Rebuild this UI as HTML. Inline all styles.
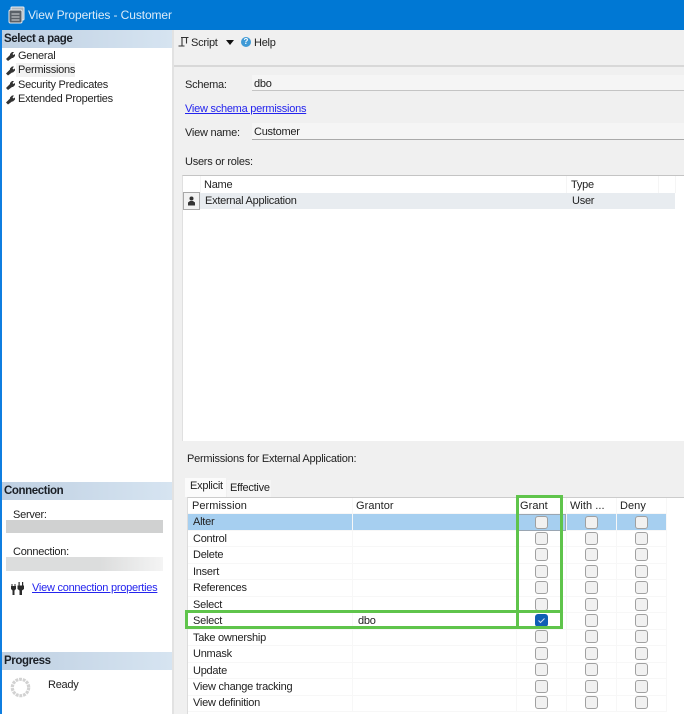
<!DOCTYPE html>
<html><head><meta charset="utf-8">
<style>
*{box-sizing:border-box;margin:0;padding:0}
html,body{width:684px;height:714px;overflow:hidden}
body{position:relative;background:#f0f0f0;font-family:"Liberation Sans",sans-serif;font-size:11px;color:#222}
.w{position:absolute;left:0;top:0;width:684px;height:714px;filter:blur(.3px)}
.a{position:absolute}
.t{position:absolute;white-space:nowrap;line-height:14px;letter-spacing:-.25px;margin-top:1px}
.g{letter-spacing:.05px}
.h{position:absolute;left:2px;width:170px;height:18px;background:linear-gradient(90deg,#bfd0e2,#d6e4f1);font-weight:bold;font-size:11.5px;letter-spacing:-.4px;line-height:18px;padding-left:2px;color:#1a1f26}
a{color:#2424ee;text-decoration:underline}
.c{position:absolute;width:13px;height:13px;border:1.5px solid #a0a0a0;border-radius:3px;background:#f1f1f1}
.r{position:absolute;left:188px;width:478px;height:1px;background:#f7f7f7}
.v{position:absolute;width:1px;background:#f7f7f7}
</style></head><body><div class="w">
<div class="a" style="left:0;top:0;width:684px;height:30px;background:#0078d4"></div>
<svg class="a" style="left:8px;top:6px" width="17" height="18" viewBox="0 0 17 18"><rect x="3" y="1" width="13" height="13" rx="1" fill="#aab4bc" stroke="#e8edf0"/><rect x="1" y="4" width="13" height="13" rx="1.500" fill="#5a6067" stroke="#e6eaed"/><path d="M3.500 8h8M3.500 11h8M3.500 14h8" stroke="#d5d8db"/></svg>
<div class="t" style="left:28px;top:8px;color:#dcebf8;font-size:12px;letter-spacing:-.1px;margin-top:0">View Properties - Customer</div>
<div class="a" style="left:0;top:30px;width:2px;height:684px;background:#0f7ee0"></div>
<div class="a" style="left:2px;top:30px;width:170px;height:684px;background:#fff"></div>
<div class="a" style="left:172px;top:30px;width:2px;height:684px;background:#e2e2e2"></div>

<div class="h" style="top:30px">Select a page</div>
<div class="a" style="left:16px;top:63px;width:59px;height:14px;background:#f2f2f2"></div>
<svg class="a" style="left:5px;top:50px" width="10" height="56" viewBox="0 0 10 56" fill="#333"><path d="M1 9l4-4 0-1 2-2 2 0-1.500 2 1 1 1.500-1 0 2-2 2-1 0-4 3z"/><path transform="translate(0,14.500)" d="M1 9l4-4 0-1 2-2 2 0-1.500 2 1 1 1.500-1 0 2-2 2-1 0-4 3z"/><path transform="translate(0,29)" d="M1 9l4-4 0-1 2-2 2 0-1.500 2 1 1 1.500-1 0 2-2 2-1 0-4 3z"/><path transform="translate(0,43.500)" d="M1 9l4-4 0-1 2-2 2 0-1.500 2 1 1 1.500-1 0 2-2 2-1 0-4 3z"/></svg>
<div class="t" style="left:18px;top:48px">General</div>
<div class="t" style="left:18px;top:62px">Permissions</div>
<div class="t" style="left:18px;top:77px">Security Predicates</div>
<div class="t" style="left:18px;top:91px">Extended Properties</div>

<div class="h" style="top:482px">Connection</div>
<div class="t" style="left:13px;top:507px">Server:</div>
<div class="a" style="left:6px;top:520px;width:157px;height:13px;background:#d0d1d1"></div>
<div class="t" style="left:13px;top:544px">Connection:</div>
<div class="a" style="left:6px;top:557px;width:157px;height:14px;background:linear-gradient(90deg,#dcdddd,#dcdddd 60%,#f4f4f4)"></div>
<svg class="a" style="left:10px;top:582px" width="15" height="14" viewBox="0 0 15 14" fill="#2b2b2b"><path d="M1 4h5v3L4.500 8.500V13h-2V8.500L1 7zM7.500 3.500H14V7l-2 1.500V13h-2.500V8.500L7.500 7z"/><path d="M1.500 2h1v2h-1zM4.500 2h1v2h-1zM8.500 0h1.200v3.500H8.500zM12 0h1.200v3.500H12z"/></svg>
<div class="t" style="left:32px;top:580px"><a>View connection properties</a></div>

<div class="h" style="top:652px">Progress</div>
<svg class="a" style="left:10px;top:677px" width="21" height="21" viewBox="0 0 21 21"><circle cx="10.500" cy="10.500" r="8.200" fill="none" stroke="#d2d2d2" stroke-width="3.200" stroke-dasharray="2.800 .9"/></svg>
<div class="t" style="left:48px;top:677px">Ready</div>

<!-- toolbar -->
<svg class="a" style="left:178px;top:36px" width="11" height="12" viewBox="0 0 11 12" fill="none" stroke="#333" stroke-width="1.100"><path d="M3 1.500h7.500M4 1.500v8M8.500 1.500v6M.5 10h6"/></svg>
<div class="t" style="left:191px;top:35px">Script</div>
<div class="a" style="left:226px;top:40px;border-left:4px solid transparent;border-right:4px solid transparent;border-top:5px solid #111"></div>
<div class="a" style="left:241px;top:37px;width:10px;height:10px;border-radius:50%;background:#3f9ad6;color:#fff;font-size:8px;font-weight:bold;line-height:10px;text-align:center">?</div>
<div class="t" style="left:254px;top:35px">Help</div>
<div class="a" style="left:174px;top:65px;width:510px;height:2px;background:#d8d8d8"></div>

<div class="t" style="left:185px;top:77px">Schema:</div>
<div class="a" style="left:252px;top:75px;width:432px;height:16px;background:#f5f5f5;border-bottom:1.500px solid #c4c4c4"></div>
<div class="t" style="left:254px;top:76px">dbo</div>
<div class="t" style="left:185px;top:101px"><a>View schema permissions</a></div>
<div class="t" style="left:185px;top:125px">View name:</div>
<div class="a" style="left:252px;top:123px;width:432px;height:17px;background:#f5f5f5;border-bottom:1.500px solid #aaa"></div>
<div class="t" style="left:254px;top:124px">Customer</div>
<div class="t" style="left:185px;top:154px">Users or roles:</div>

<!-- users grid -->
<div class="a" style="left:182px;top:175px;width:502px;height:266px;background:#fff;border-top:1.500px solid #c4c4c4;border-left:1.500px solid #e0e0e0"></div>
<div class="a" style="left:200px;top:176px;width:1px;height:17px;background:#f5f5f5"></div>
<div class="a" style="left:566px;top:176px;width:1px;height:17px;background:#f5f5f5"></div>
<div class="a" style="left:658px;top:176px;width:1px;height:17px;background:#f5f5f5"></div>
<div class="a" style="left:675px;top:176px;width:1px;height:17px;background:#f5f5f5"></div>
<div class="a" style="left:200px;top:193px;width:475px;height:16px;background:#e8ecf0"></div>
<div class="a" style="left:183px;top:192px;width:17px;height:18px;background:#f2f2f2;border:1px solid #a8a8a8"></div>
<svg class="a" style="left:187px;top:196px" width="9" height="10" viewBox="0 0 9 10" fill="#333"><circle cx="4.500" cy="2.500" r="2"/><path d="M1 9.500V6.500l2-1.500h3l2 1.500v3z"/></svg>
<div class="t" style="left:204px;top:177px">Name</div>
<div class="t" style="left:205px;top:193px">External Application</div>
<div class="t" style="left:571px;top:177px">Type</div>
<div class="t" style="left:572px;top:193px">User</div>

<div class="t" style="left:187px;top:451px">Permissions for External Application:</div>
<div class="a" style="left:185px;top:478px;width:41px;height:19px;background:#fbfbfb"></div>
<div class="a" style="left:227px;top:480px;width:44px;height:17px;background:#f5f5f5"></div>
<div class="t" style="left:190px;top:478px">Explicit</div>
<div class="t" style="left:230px;top:480px">Effective</div>

<!-- permissions grid -->
<div class="a" style="left:187px;top:497px;width:497px;height:217px;background:#fff;border-left:1.500px solid #dcdcdc;border-top:1px solid #ccc"></div>
<div class="a" style="left:188px;top:514px;width:478px;height:16px;background:#a6cff0"></div>
<div class="r" style="top:513px"></div><div class="r" style="top:530px"></div><div class="r" style="top:546px"></div><div class="r" style="top:563px"></div><div class="r" style="top:579px"></div><div class="r" style="top:596px"></div><div class="r" style="top:612px"></div><div class="r" style="top:629px"></div><div class="r" style="top:645px"></div><div class="r" style="top:662px"></div><div class="r" style="top:678px"></div><div class="r" style="top:695px"></div><div class="r" style="top:711px"></div>
<div class="v" style="left:352px;top:498px;height:214px"></div>
<div class="v" style="left:516px;top:498px;height:214px"></div>
<div class="v" style="left:566px;top:498px;height:214px"></div>
<div class="v" style="left:616px;top:498px;height:214px"></div>
<div class="v" style="left:666px;top:498px;height:214px"></div>
<div class="a" style="left:518px;top:514px;width:48px;height:17px;border:1px solid #9aa6b2"></div>

<div class="t g" style="left:192px;top:498px">Permission</div>
<div class="t g" style="left:356px;top:498px">Grantor</div>
<div class="t g" style="left:520px;top:498px">Grant</div>
<div class="t g" style="left:570px;top:498px">With ...</div>
<div class="t g" style="left:620px;top:498px">Deny</div>

<div class="t" style="left:193px;top:514px">Alter</div>
<div class="t" style="left:193px;top:531px">Control</div>
<div class="t" style="left:193px;top:547px">Delete</div>
<div class="t" style="left:193px;top:564px">Insert</div>
<div class="t" style="left:193px;top:580px">References</div>
<div class="t" style="left:193px;top:597px">Select</div>
<div class="t" style="left:193px;top:613px">Select</div>
<div class="t" style="left:358px;top:613px">dbo</div>
<div class="t" style="left:193px;top:630px">Take ownership</div>
<div class="t" style="left:193px;top:646px">Unmask</div>
<div class="t" style="left:193px;top:663px">Update</div>
<div class="t" style="left:193px;top:679px">View change tracking</div>
<div class="t" style="left:193px;top:695px">View definition</div>

<div class="c" style="left:535px;top:516px"></div><div class="c" style="left:585px;top:516px"></div><div class="c" style="left:635px;top:516px"></div>
<div class="c" style="left:535px;top:532px"></div><div class="c" style="left:585px;top:532px"></div><div class="c" style="left:635px;top:532px"></div>
<div class="c" style="left:535px;top:548px"></div><div class="c" style="left:585px;top:548px"></div><div class="c" style="left:635px;top:548px"></div>
<div class="c" style="left:535px;top:565px"></div><div class="c" style="left:585px;top:565px"></div><div class="c" style="left:635px;top:565px"></div>
<div class="c" style="left:535px;top:581px"></div><div class="c" style="left:585px;top:581px"></div><div class="c" style="left:635px;top:581px"></div>
<div class="c" style="left:535px;top:598px"></div><div class="c" style="left:585px;top:598px"></div><div class="c" style="left:635px;top:598px"></div>
<div class="c" style="left:535px;top:614px;background:#0f5fb5;border-color:#0f5fb5"><svg style="position:absolute;left:.5px;top:.5px" width="9" height="9" viewBox="0 0 9 9"><path d="M1.500 4.500l2 2 4-4" fill="none" stroke="#cfe0f2" stroke-width="1"/></svg></div><div class="c" style="left:585px;top:614px"></div><div class="c" style="left:635px;top:614px"></div>
<div class="c" style="left:535px;top:630px"></div><div class="c" style="left:585px;top:630px"></div><div class="c" style="left:635px;top:630px"></div>
<div class="c" style="left:535px;top:647px"></div><div class="c" style="left:585px;top:647px"></div><div class="c" style="left:635px;top:647px"></div>
<div class="c" style="left:535px;top:663px"></div><div class="c" style="left:585px;top:663px"></div><div class="c" style="left:635px;top:663px"></div>
<div class="c" style="left:535px;top:680px"></div><div class="c" style="left:585px;top:680px"></div><div class="c" style="left:635px;top:680px"></div>
<div class="c" style="left:535px;top:696px"></div><div class="c" style="left:585px;top:696px"></div><div class="c" style="left:635px;top:696px"></div>

<!-- green highlights -->
<div class="a" style="left:516px;top:495px;width:47px;height:134px;border:3px solid #5fc44b"></div>
<div class="a" style="left:185px;top:610px;width:378px;height:19px;border:3px solid #5fc44b"></div>
</div></body></html>
